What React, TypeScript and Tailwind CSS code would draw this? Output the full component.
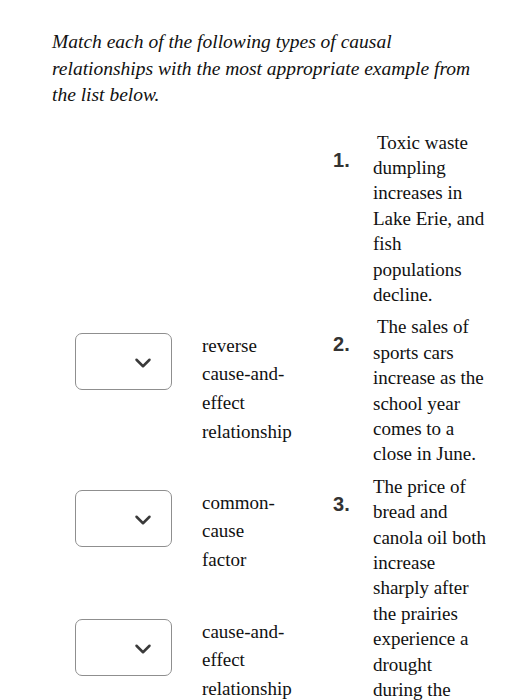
import { ChevronDown } from "lucide-react";

const serif = "font-['Liberation_Serif','Times_New_Roman',serif]";

const pairs = [
  { label: "reverse cause-and-effect relationship", h: "h-[157px]" },
  { label: "common-cause factor", h: "h-[129px]" },
  { label: "cause-and-effect relationship", h: "h-[129px]" },
];

const examples = [
  { n: 1, text: "Toxic waste dumpling increases in Lake Erie, and fish populations decline.", indent: true },
  { n: 2, text: "The sales of sports cars increase as the school year comes to a close in June.", indent: true },
  { n: 3, text: "The price of bread and canola oil both increase sharply after the prairies experience a drought during\u00A0the summer.", indent: false },
];

const Select = () => (
  <div className="relative w-[97px] h-[57px] shrink-0 rounded-[7px] border border-[#8f8f8f] bg-white">
    <ChevronDown size={26} strokeWidth={2.3} className="absolute right-[15px] top-[16px] text-[#3a3a3a]" />
  </div>
);

export default function App() {
  return (
    <div className={`w-[512px] h-[700px] overflow-hidden bg-white text-[#111] ${serif}`}>
      <p className="pl-[52px] pt-[29px] w-[487px] italic text-[19.5px] leading-[26.5px]">
        Match each of the following types of causal relationships with the most appropriate example from the list below.
      </p>

      <div className="flex mt-[21px]">
        {/* left: dropdowns with their labels */}
        <div className="w-[333px] pl-[75px] pt-[203px] shrink-0">
          {pairs.map((p, i) => (
            <div key={i} className={`flex items-start gap-[30px] ${p.h}`}>
              <Select />
              <div className="w-[88px] text-[19px] leading-[28.7px] -mt-[1px]">{p.label}</div>
            </div>
          ))}
        </div>

        {/* right: numbered examples */}
        <div className="flex flex-col gap-[7px]">
          {examples.map((e) => (
            <div key={e.n} className="flex">
              <div className="w-[40px] mt-[18px] font-['Liberation_Sans',Arial,sans-serif] font-bold text-[20px] leading-[25.4px] text-[#333]">
                {e.n}.
              </div>
              <div className={`w-[118px] text-[19px] leading-[25.4px] ${e.indent ? "indent-[4px]" : ""}`}>
                {e.text}
              </div>
            </div>
          ))}
        </div>
      </div>
    </div>
  );
}
